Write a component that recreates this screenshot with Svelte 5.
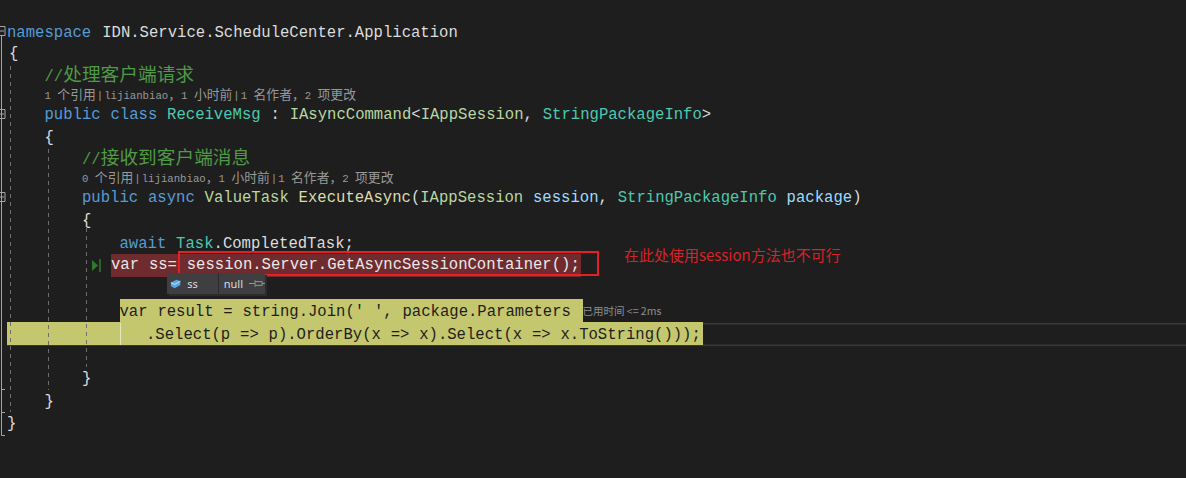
<script>
  // editor gutter marks: indent guides and outline bar
  const guides = [
    { x: 10.5, y1: 66, y2: 412 },
    { x: 48.5, y1: 149, y2: 390 },
    { x: 86.5, y1: 228, y2: 367 },
  ];
</script>

<div class="editor">
  <svg class="gutter" width="1186" height="478" aria-hidden="true">
    {#each guides as g}
      <line x1={g.x} x2={g.x} y1={g.y1} y2={g.y2} stroke="#6e6e6e" stroke-dasharray="4 4" />
    {/each}
    <path d="M1.5 36V435.5H5M1.5 389.5H5M1.5 412.5H5" fill="none" stroke="#a5a5a5" />
    <path d="M0 26.5H5V35.5H0M0 31H4M0 109.5H5V118.5H0M0 114H4M0 192.5H5V201.5H0M0 197H4" fill="none" stroke="#a5a5a5" />
    <path d="M92 260V271L98 265.5Z" fill="#2f7a2f" />
    <line x1="100" x2="100" y1="259" y2="272" stroke="#2f7a2f" stroke-width="1.5" />
    <line x1="120.5" x2="120.5" y1="323" y2="345" stroke="#e6e6c0" />
  </svg>

  <div class="code">
    <div class="row first"><span class="kw">namespace</span> IDN.Service.ScheduleCenter.Application</div>
    <div class="row open">{'{'}</div>

    <div class="row in1 cm">//<span class="cjk">处理客户端请求</span></div>
    <div class="lens in1">1 <span class="zh">个引用</span><span class="sep">|</span>lijianbiao<span class="zh">，</span>1 <span class="zh">小时前</span><span class="sep">|</span>1 <span class="zh">名作者，</span>2 <span class="zh">项更改</span></div>
    <div class="row in1"><span class="kw">public class</span> <span class="ty">ReceiveMsg</span> : <span class="if">IAsyncCommand</span>&lt;<span class="if">IAppSession</span>, <span class="ty">StringPackageInfo</span>&gt;</div>
    <div class="row in1">{'{'}</div>

    <div class="row in2 cm">//<span class="cjk">接收到客户端消息</span></div>
    <div class="lens in2">0 <span class="zh">个引用</span><span class="sep">|</span>lijianbiao<span class="zh">，</span>1 <span class="zh">小时前</span><span class="sep">|</span>1 <span class="zh">名作者，</span>2 <span class="zh">项更改</span></div>
    <div class="row in2"><span class="kw">public async</span> <span class="if">ValueTask</span> <span class="fn">ExecuteAsync</span>(<span class="if">IAppSession</span> <span class="pm">session</span>, <span class="ty">StringPackageInfo</span> <span class="pm">package</span>)</div>
    <div class="row in2">{'{'}</div>

    <div class="row in3"><span class="kw">await</span> <span class="ty">Task</span>.CompletedTask;</div>
    <div class="row stmt"><span class="err">var ss= session.Server.GetAsyncSessionContainer();</span></div>
    <div class="row"></div>
    <div class="row in3"><span class="hit hit-first">var result = string.Join(' ', package.Parameters</span><span class="perf">已用时间 &lt;= 2ms</span></div>
    <div class="row cur"><span class="hit hit-wide">.Select(p =&gt; p).OrderBy(x =&gt; x).Select(x =&gt; x.ToString()));</span></div>
    <div class="row"></div>
    <div class="row in2">{'}'}</div>
    <div class="row in1">{'}'}</div>
    <div class="row">{'}'}</div>
  </div>

  <div class="redbox"></div>
  <div class="note">在此处使用session方法也不可行</div>

  <div class="datatip">
    <svg width="12" height="12" viewBox="0 0 12 12">
      <path d="M1 4.5L7 1.5L11 3V7L5 10.5L1 8.5Z" fill="#5aa7e6" />
      <path d="M1 4.5L5 6.5L11 3" fill="none" stroke="#cfe6f8" />
    </svg>
    <span class="name">ss</span>
    <span class="val">null</span>
    <svg width="17" height="9" viewBox="0 0 17 9">
      <path d="M0 4.5H6M6.5 1V8M7 2.5H14V6.5H7M14 4.5H17" fill="none" stroke="#9a9a9a" />
    </svg>
  </div>
</div>

<style>
  :global(body) {
    margin: 0;
    background: #1e1e1e;
  }
  .editor {
    position: relative;
    width: 1186px;
    height: 478px;
    overflow: hidden;
    background: #1e1e1e;
    color: #dcdcdc;
  }
  .gutter {
    position: absolute;
    left: 0;
    top: 0;
    z-index: 2;
    pointer-events: none;
  }
  .code {
    padding: 21.5px 0 0 7px;
    font: 15.6px/22.6px "Liberation Mono", "Noto Sans CJK SC", monospace;
    word-spacing: 0.45px;
  }
  .row {
    height: 22.6px;
    white-space: pre;
  }
  .first { word-spacing: 1.6px; }
  .open {
    padding-left: 2px;
    line-height: 20.6px;
  }
  .in1 { padding-left: 37.5px; }
  .in2 { padding-left: 75px; }
  .in3 { padding-left: 112.5px; }
  .lens {
    height: 15.2px;
    font-size: 10.7px;
    line-height: 9px;
    color: #999;
    white-space: pre;
    word-spacing: 0;
  }
  .zh {
    font: 12.8px/9px "Noto Sans CJK SC", sans-serif;
  }
  .sep { margin: 0 1px; }
  .kw { color: #569cd6; }
  .ty { color: #4ec9b0; }
  .if { color: #b8d7a3; }
  .fn { color: #dcdcaa; }
  .pm { color: #9cdcfe; }
  .cm {
    color: #4f9a45;
    line-height: 12px;
  }
  .cjk {
    font: 18.7px/12px "Noto Sans CJK SC", sans-serif;
  }
  .stmt {
    padding-left: 104px;
  }
  .err {
    display: inline-block;
    vertical-align: top;
    margin-top: -1px;
    width: 470px;
    height: 23px;
    line-height: 22px;
    background: #6f2b2e;
    color: #e8e8e8;
  }
  .hit {
    display: inline-block;
    vertical-align: top;
    box-sizing: border-box;
    margin-top: -1px;
    height: 23px;
    line-height: 27px;
    background: #c5c76f;
    color: #1e1e1e;
  }
  .hit-first {
    width: 463px;
  }
  .hit-wide {
    width: 696px;
    padding-left: 139px;
  }
  .perf {
    font: 10.5px/22px "Noto Sans CJK SC", sans-serif;
    color: #8f8f8f;
    word-spacing: 0;
  }
  .cur {
    box-shadow: inset 0 1.5px 0 #383838, inset 0 -1.5px 0 #383838;
  }
  .redbox {
    position: absolute;
    left: 178px;
    top: 251px;
    width: 417px;
    height: 21px;
    border: 2px solid #e81e25;
  }
  .note {
    position: absolute;
    left: 624px;
    top: 245px;
    font: 15px/20px "Noto Sans CJK SC", sans-serif;
    color: #d92228;
  }
  .datatip {
    position: absolute;
    left: 167px;
    top: 273px;
    width: 98px;
    height: 21px;
    display: flex;
    align-items: center;
    box-sizing: border-box;
    padding-left: 3px;
    gap: 6px;
    background: #3f3f41;
    box-shadow: 2px 2px 0 #2b2b2b;
    font: 11px/21px "Noto Sans", sans-serif;
    color: #dcdcdc;
  }
  .name {
    width: 26px;
  }
  .val {
    padding-left: 5px;
    border-left: 1px solid #2b2b2d;
  }
</style>
